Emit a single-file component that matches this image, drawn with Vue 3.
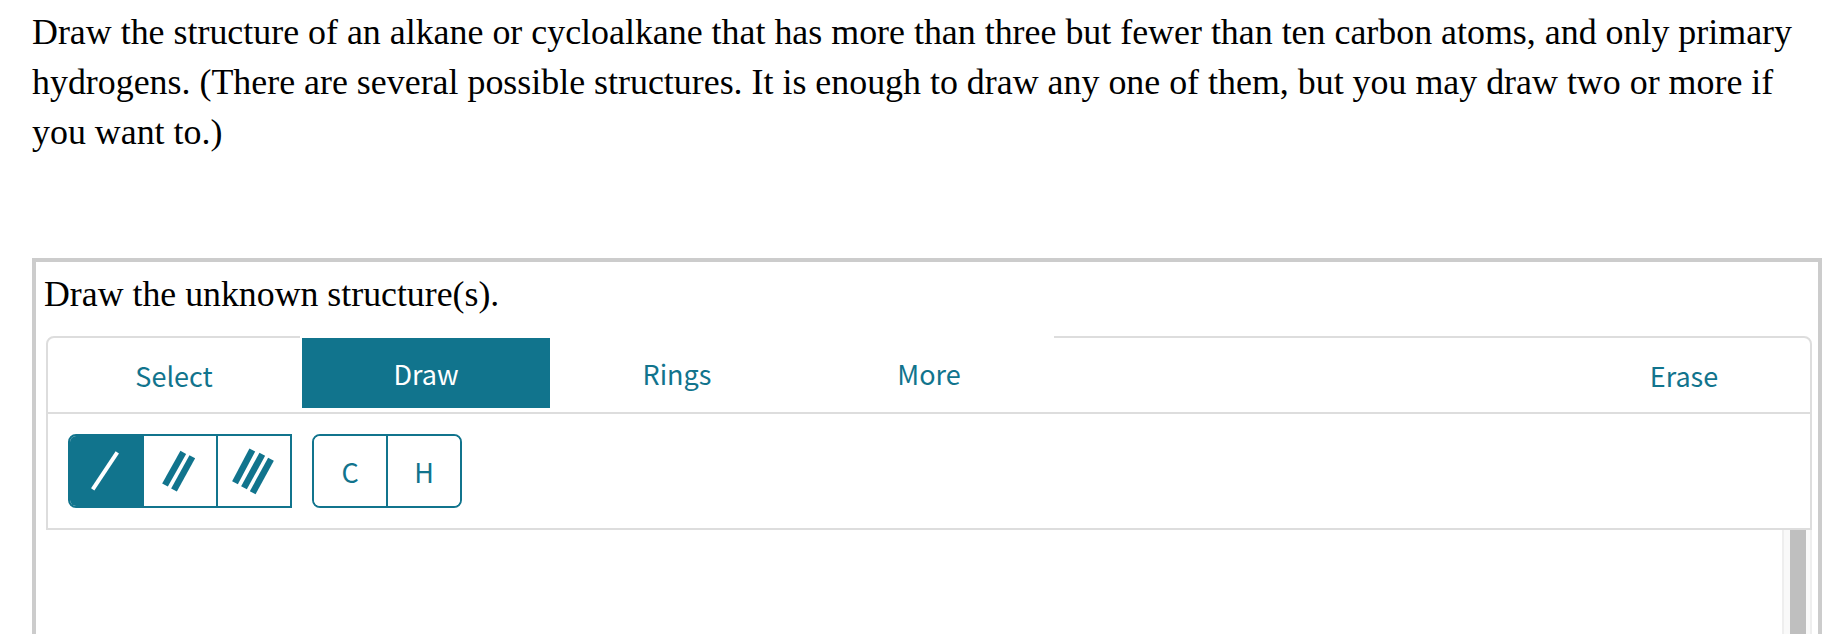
<script setup>
const mainTabs = [
  { label: 'Draw', active: true },
  { label: 'Rings', active: false },
  { label: 'More', active: false },
]
</script>

<template>
  <div class="page">
    <p class="question">
      Draw the structure of an alkane or cycloalkane that has more than three but fewer than ten carbon atoms, and only primary hydrogens. (There are several possible structures. It is enough to draw any one of them, but you may draw two or more if you want to.)
    </p>
    <section class="box">
      <h2 class="title">Draw the unknown structure(s).</h2>
      <div class="tabs">
        <button class="tab tab-select">Select</button>
        <button
          v-for="tab in mainTabs"
          :key="tab.label"
          class="tab tab-main"
          :class="{ active: tab.active }"
        >{{ tab.label }}</button>
        <div class="spacer"></div>
        <button class="tab tab-erase">Erase</button>
      </div>
      <div class="toolbar">
        <div class="group">
          <button class="cell cell-single active" aria-label="Single bond">
            <svg width="74" height="70" viewBox="0 0 74 70"><line x1="22.7" y1="53.3" x2="47.3" y2="16.3" stroke="#fff" stroke-width="4" /></svg>
          </button>
          <button class="cell cell-double" aria-label="Double bond">
            <svg width="72" height="70" viewBox="0 0 72 70">
              <line x1="21" y1="49" x2="39.3" y2="16.3" stroke="#11748d" stroke-width="6.5" />
              <line x1="30" y1="54" x2="48.3" y2="20.7" stroke="#11748d" stroke-width="6.5" />
            </svg>
          </button>
          <button class="cell cell-triple" aria-label="Triple bond">
            <svg width="72" height="70" viewBox="0 0 72 70">
              <line x1="17" y1="46.7" x2="34.3" y2="14" stroke="#11748d" stroke-width="6.5" />
              <line x1="26" y1="51.7" x2="44.3" y2="18.3" stroke="#11748d" stroke-width="6.5" />
              <line x1="34.7" y1="56.7" x2="53" y2="23.3" stroke="#11748d" stroke-width="6.5" />
            </svg>
          </button>
        </div>
        <div class="group atoms">
          <button class="cell atom atom-c">C</button>
          <button class="cell atom atom-h">H</button>
        </div>
      </div>
      <div class="canvas">
        <div class="scrollbar"><div class="thumb"></div></div>
      </div>
    </section>
  </div>
</template>

<style>
html, body { margin: 0; background: #fff; overflow: hidden; }
</style>

<style scoped>
.page {
  height: 634px;
  overflow: hidden;
  box-sizing: border-box;
  padding: 7px 20px 0 32px;
  font-family: "Liberation Serif", "Times New Roman", serif;
  color: #000;
}
.question {
  margin: 0 0 101px;
  font-size: 35.9px;
  line-height: 50px;
}
.box {
  border: 4px solid #ccc;
  height: 600px;
  box-sizing: border-box;
  padding: 0 6px 0 10px;
  background: #fff;
}
.title {
  margin: 0 0 0 -2px;
  font-size: 35.8px;
  font-weight: 400;
  line-height: 50px;
  padding: 7px 0 17px;
  height: 74px;
  box-sizing: border-box;
}
button {
  font-family: "Noto Sans CJK SC", "Noto Sans", sans-serif;
  background: #fff;
  border: 0;
  padding: 0;
  color: #11748d;
}
.tabs {
  display: flex;
  height: 78px;
  box-sizing: border-box;
  border: 2px solid #ddd;
  border-radius: 8px 8px 0 0;
}
.tab {
  font-size: 27px;
  height: 70px;
}
.tab-select {
  width: 254px;
  padding: 4px 2px 0 0;
  background: transparent;
}
.tab-main {
  width: 252px;
  height: 72px;
  margin-top: -2px;
  padding-left: 2px;
  border-top: 2px solid #fff;
}
.tab-main.active {
  width: 248px;
  padding-left: 0;
  background: #11748d;
  color: #fff;
  box-shadow: -2px 0 0 #fff;
}
.spacer { flex: 1; }
.tab-erase {
  width: 252px;
  padding-top: 4px;
  background: transparent;
}
.toolbar {
  display: flex;
  gap: 20px;
  height: 116px;
  box-sizing: border-box;
  padding: 20px;
  border: 2px solid #ddd;
  border-top: 0;
}
.group {
  display: flex;
  height: 74px;
  box-sizing: border-box;
  border: 2px solid #11748d;
  border-radius: 8px 0 0 8px;
  overflow: hidden;
}
.group.atoms {
  border-radius: 8px;
}
.cell {
  display: flex;
  align-items: center;
  justify-content: center;
  height: 70px;
}
.cell svg { display: block; }
.cell.active {
  width: 74px;
  background: #11748d;
}
.cell-double {
  width: 74px;
  border-right: 2px solid #11748d;
  justify-content: flex-start;
}
.cell-triple {
  width: 72px;
}
.atom {
  font-size: 27px;
}
.atom-c { width: 74px; border-right: 2px solid #11748d; }
.atom-h { width: 72px; }
.canvas {
  display: flex;
  justify-content: flex-end;
  height: 200px;
}
.scrollbar {
  width: 30px;
  box-sizing: border-box;
  padding: 0 4px 0 6px;
  background: #f9f9f9;
  border-left: 2px solid #eee;
  border-right: 2px solid #eee;
}
.thumb {
  width: 16px;
  height: 100%;
  background: #bfbfbf;
}
</style>
